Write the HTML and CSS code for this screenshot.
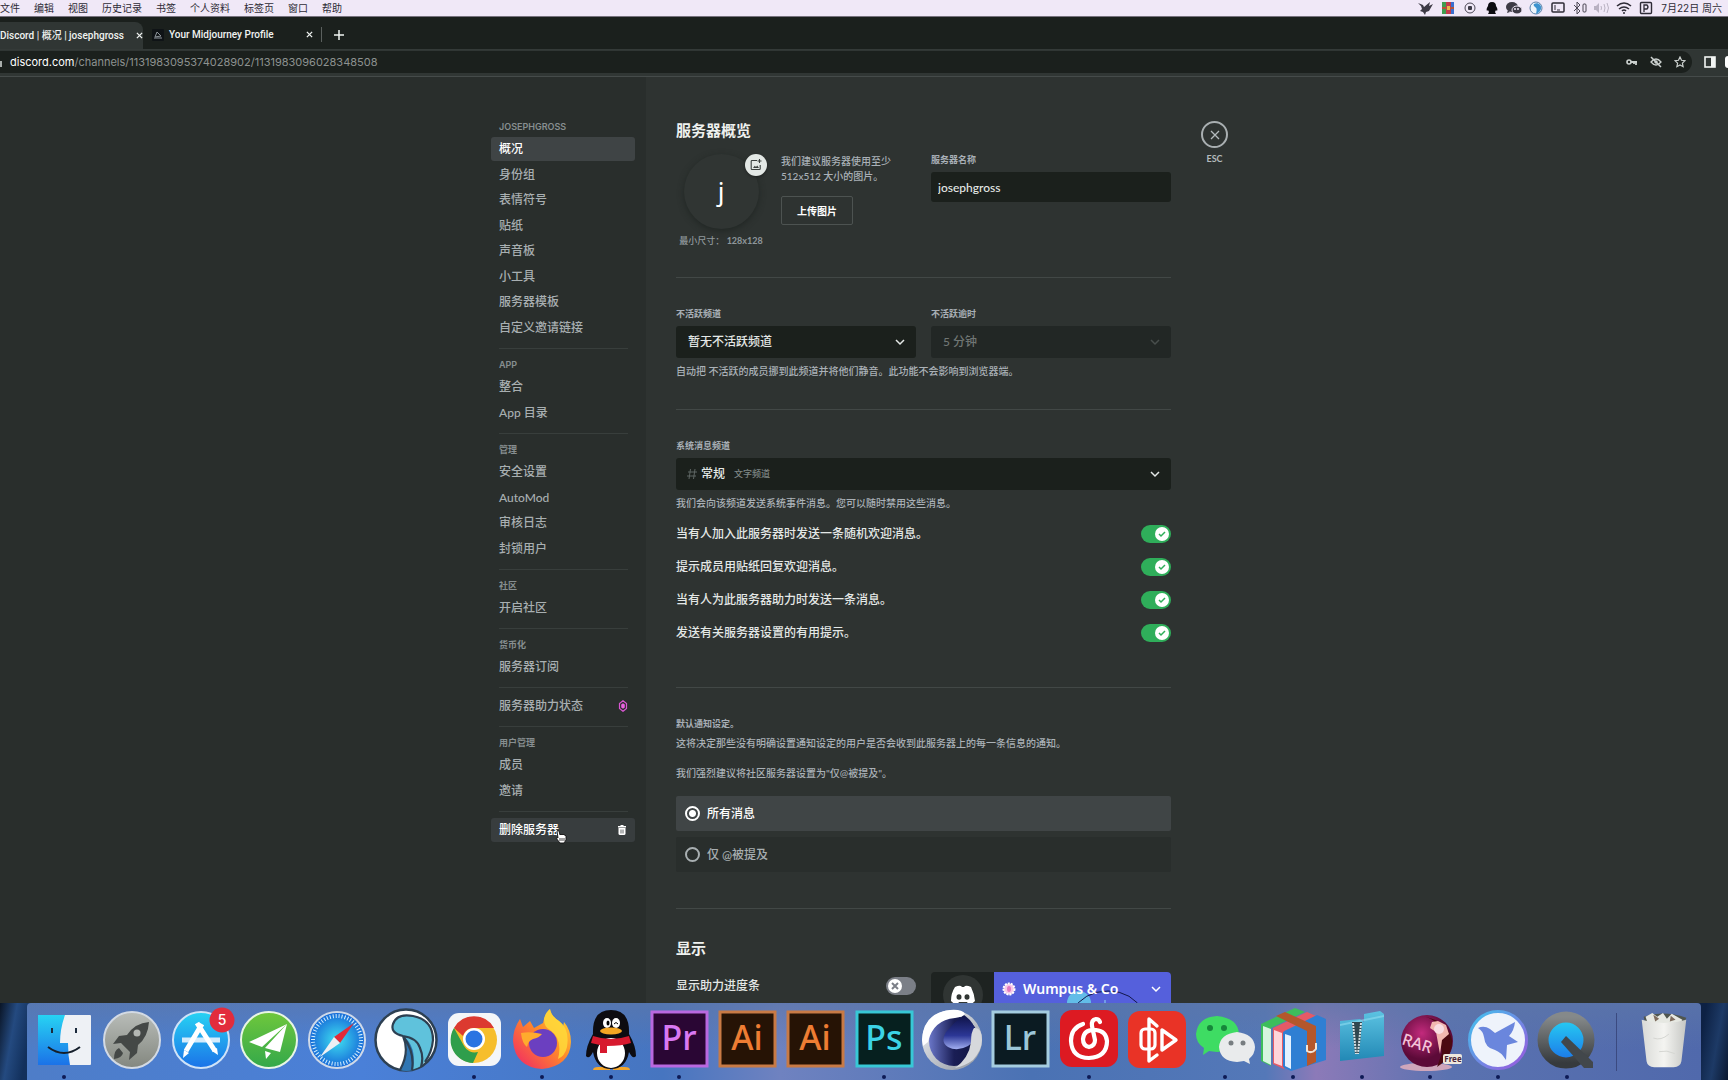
FILE: index.html
```html
<!DOCTYPE html>
<html lang="zh-CN">
<head>
<meta charset="utf-8">
<meta name="viewport" content="width=device-width, initial-scale=1">
<title>Discord | 概况 | josephgross</title>
<link rel="stylesheet" href="styles.css">
</head>
<body>
<header class="menubar">
  <nav class="menus">
    <button>文件</button><button>编辑</button><button>视图</button><button>历史记录</button><button>书签</button><button>个人资料</button><button>标签页</button><button>窗口</button><button>帮助</button>
  </nav>
  <div class="status">
    <svg class="st" viewBox="0 0 16 14"><path d="M0 2l5 2 1 2L12 1l-1 4 4-2-4 7-3 1-1 3-2-3-3-1 2-2-1-3z" fill="#3d3a45"/></svg>
    <svg class="st" viewBox="0 0 16 14"><rect x="2" y="1" width="12" height="12" rx="1" fill="#c23b4b"/><path d="M2 1h4v12H2z" fill="#3f9d4f"/><path d="M11 1h3v12h-3z" fill="#3a6fd0"/><path d="M2 6h12v2H2z" fill="#b5533a"/><rect x="7" y="5" width="3" height="4" fill="#e7b64b"/></svg>
    <svg class="st" viewBox="0 0 16 14"><circle cx="8" cy="7" r="5" fill="none" stroke="#4a4653"/><rect x="6" y="5" width="4" height="4" rx="1" fill="#3d3a45"/></svg>
    <svg class="st" viewBox="0 0 16 14"><path d="M8 1c3 0 4 2 4 4 1 2 2 3 1 5l-1-1-1 2 1 2H4l1-2-1-2-1 1c-1-2 0-3 1-5 0-2 1-4 4-4z" fill="#0c0b10"/></svg>
    <svg class="st" viewBox="0 0 16 14"><ellipse cx="6" cy="6" rx="6" ry="5" fill="#3d3a45"/><ellipse cx="11" cy="9" rx="5" ry="4" fill="#3d3a45" stroke="#efe7f6"/><path d="M2 9l-1 3 3-1z" fill="#3d3a45"/><circle cx="9" cy="8" r="1" fill="#efe7f6"/><circle cx="12" cy="8" r="1" fill="#efe7f6"/></svg>
    <svg class="st" viewBox="0 0 16 14"><circle cx="8" cy="7" r="6" fill="#eef4fb" stroke="#5b7fa8"/><path d="M6 3c4-2 8 1 7 5-1 3-3 4-5 5 1-4 1-6-1-7-1-1-2-2-1-3z" fill="#3d93cf"/></svg>
    <svg class="st" viewBox="0 0 16 14"><rect x="2" y="2" width="12" height="9" rx="1" fill="none" stroke="#2e2b36" stroke-width="1.5"/><path d="M5 4v5M7 9h3" stroke="#2e2b36"/></svg>
    <svg class="st" viewBox="0 0 16 14"><path d="M2 4l6 6-3 3V1l3 3-6 6" fill="none" stroke="#4a4653"/><rect x="11" y="3" width="3" height="8" rx="1" fill="none" stroke="#4a4653"/></svg>
    <svg class="st" viewBox="0 0 16 14"><path d="M0 5h2l3-3v10L2 9H0z" fill="#b9b2c2"/><path d="M7 5q1 2 0 4M10 3q2 4 0 8M13 2q3 5 0 10" fill="none" stroke="#b9b2c2"/></svg>
    <svg class="st" viewBox="0 0 16 14"><path d="M1 5q7-6 14 0M3 8q5-4 10 0M6 10q2-2 4 0" fill="none" stroke="#2e2b36" stroke-width="1.6"/><circle cx="8" cy="12" r="1" fill="#2e2b36"/></svg>
    <svg class="st" viewBox="0 0 16 14"><rect x="2.500" y="1.500" width="11" height="11" rx="1" fill="none" stroke="#2e2b36" stroke-width="1.4"/><path d="M6 11V4h3q2 2 0 4H6" fill="none" stroke="#2e2b36" stroke-width="1.3"/></svg>
    <time>7月22日 周六</time>
  </div>
</header>

<div class="tabs">
  <div class="tab on"><button class="tabname">Discord | 概况 | josephgross</button><button class="tx" aria-label="关闭标签页"><svg viewBox="0 0 8 8"><path d="M1 1l6 6M7 1L1 7"/></svg></button></div>
  <div class="tab"><svg class="fav" viewBox="0 0 12 12"><rect width="12" height="12" rx="1" fill="#0f1316"/><path d="M2 9h8M3 8l2-5 4 4z" fill="none" stroke="#8d949a"/></svg><button class="tabname">Your Midjourney Profile</button><button class="tx" aria-label="关闭标签页"><svg viewBox="0 0 8 8"><path d="M1 1l6 6M7 1L1 7"/></svg></button></div>
  <button class="tx plus" aria-label="新标签页"><svg viewBox="0 0 10 10"><path d="M5 0v10M0 5h10"/></svg></button>
</div>

<div class="toolbar">
  <div class="omni">
    <svg class="lock" viewBox="0 0 4 10"><rect y="4" width="2" height="6" fill="#a9aeac"/></svg>
    <label for="url">discord.com</label><input id="url" value="/channels/1131983095374028902/1131983096028348508">
    <button aria-label="密码"><svg viewBox="0 0 12 12"><circle cx="3" cy="6" r="2" fill="none" stroke="#ccd1cf" stroke-width="1.600"/><path d="M5 6h6M10 6v3M8 6v2" stroke="#ccd1cf" stroke-width="1.800" fill="none"/></svg></button>
    <button aria-label="隐私"><svg viewBox="0 0 12 12"><path d="M1 6q5-6 10 0-5 6-10 0z" fill="none" stroke="#ccd1cf" stroke-width="1.300"/><circle cx="6" cy="6" r="1.700" fill="#ccd1cf"/><path d="M1 1l10 10" stroke="#ccd1cf" stroke-width="1.500"/></svg></button>
    <button aria-label="收藏"><svg viewBox="0 0 12 12"><path d="M6 1l1.500 3.300 3.500.400-2.600 2.400.700 3.600L6 9l-3.100 1.700.700-3.600L1 4.700l3.500-.400z" fill="none" stroke="#ccd1cf" stroke-width="1.200"/></svg></button>
  </div>
  <button class="panel" aria-label="侧边栏"><svg viewBox="0 0 12 12"><rect x="1" y="1" width="10" height="10" fill="none" stroke="#f2f5f3" stroke-width="1.600"/><rect x="7" y="1" width="4" height="10" fill="#f2f5f3"/></svg></button>
  <span class="me"></span>
</div>

<div class="app">
  <aside class="side">
    <nav class="sidenav">
      <h2>JOSEPHGROSS</h2>
      <ul><li><a class="cur" href="#o">概况</a></li><li><a href="#r">身份组</a></li><li><a href="#e">表情符号</a></li><li><a href="#s">贴纸</a></li><li><a href="#b">声音板</a></li><li><a href="#w">小工具</a></li><li><a href="#t">服务器模板</a></li><li><a href="#v">自定义邀请链接</a></li></ul>
      <hr><h2>APP</h2>
      <ul><li><a href="#i">整合</a></li><li><a href="#a">App 目录</a></li></ul>
      <hr><h2>管理</h2>
      <ul><li><a href="#sf">安全设置</a></li><li><a href="#am">AutoMod</a></li><li><a href="#al">审核日志</a></li><li><a href="#bn">封锁用户</a></li></ul>
      <hr><h2>社区</h2>
      <ul><li><a href="#c">开启社区</a></li></ul>
      <hr><h2>货币化</h2>
      <ul><li><a href="#m">服务器订阅</a></li></ul>
      <hr>
      <ul><li><a href="#bo">服务器助力状态<svg class="gem" viewBox="0 0 10 12"><path d="M5 .700l3.500 2.800v5L5 11.300 1.500 8.500v-5z" fill="none" stroke="#d957d2" stroke-width="1.200"/><path d="M5 3.200l1.800 1.400v2.800L5 8.800 3.200 7.400V4.600z" fill="#e963e0"/></svg></a></li></ul>
      <hr><h2>用户管理</h2>
      <ul><li><a href="#mb">成员</a></li><li><a href="#iv">邀请</a></li></ul>
      <hr>
      <ul><li class="del"><button>删除服务器<svg class="bin" viewBox="0 0 10 10"><path d="M3.500 0h3v1H9v1.500H1V1h2.500z" fill="#fff"/><path d="M1.500 3h7v5.500q0 1.500-1.500 1.500H3q-1.500 0-1.500-1.500z" fill="#fff"/><path d="M4 4.500v4M6 4.500v4" stroke="#3c4142" stroke-width=".800"/></svg></button>
        <svg class="hand" viewBox="0 0 12 14"><path d="M2 1q1-1 2 0l1 4 1-1 1 1 1-1 1 1h1l1 1v4l-2 3H5L1 8q0-1 2 0z" fill="#fff" stroke="#111" stroke-width=".900"/><path d="M5 8v3M7 8v3M9 8v3" stroke="#111" stroke-width=".800"/></svg></li></ul>
    </nav>
  </aside>

  <main class="main">
    <div class="content">
      <h1>服务器概览</h1>
      <section class="intro">
        <div class="icon">
          <div class="avatar">j<button class="addpic" aria-label="上传"><svg viewBox="0 0 12 12"><path d="M7 1.500H2q-.800 0-.800.800v7.400q0 .800.800.800h7.400q.800 0 .800-.800V6M9.500 0v4M7.500 2h4" fill="none" stroke="#3a403e" stroke-width="1.100"/><path d="M3 9l1.800-2.200L6 8l1.200-1.500L9 9z" fill="#3a403e"/></svg></button></div>
          <p class="min">最小尺寸： <b>128x128</b></p>
        </div>
        <div class="upload"><p class="desc">我们建议服务器使用至少 512x512 大小的图片。</p><button class="outline">上传图片</button></div>
        <div class="field"><label class="lab" for="name">服务器名称</label><input id="name" class="box" value="josephgross"></div>
      </section>
      <hr>
      <section>
        <div class="two">
          <div class="field"><label class="lab" for="afk">不活跃频道</label><div class="sel"><select id="afk"><option>暂无不活跃频道</option></select><svg class="chev" viewBox="0 0 10 10"><path d="M1 3l4 4 4-4"/></svg></div></div>
          <div class="field"><label class="lab" for="afkt">不活跃逾时</label><div class="sel off"><select id="afkt" disabled><option>5 分钟</option></select><svg class="chev" viewBox="0 0 10 10"><path d="M1 3l4 4 4-4"/></svg></div></div>
        </div>
        <p class="desc below">自动把 不活跃的成员挪到此频道并将他们静音。此功能不会影响到浏览器端。</p>
      </section>
      <hr>
      <section>
        <label class="lab" for="sys">系统消息频道</label>
        <div class="sel chan"><svg class="hash" viewBox="0 0 10 10"><path d="M3.500 0L2 10M8 0L6.500 10M1 3h9M0 7h9"/></svg><select id="sys"><option>常规</option></select><span class="kind">文字频道</span><svg class="chev" viewBox="0 0 10 10"><path d="M1 3l4 4 4-4"/></svg></div>
        <p class="desc below">我们会向该频道发送系统事件消息。您可以随时禁用这些消息。</p>
        <div class="rows">
          <label class="row">当有人加入此服务器时发送一条随机欢迎消息。<span class="tog"><input type="checkbox" checked><svg viewBox="0 0 14 14"><path d="M4 7l2 2 4-4"/></svg></span></label>
          <label class="row">提示成员用贴纸回复欢迎消息。<span class="tog"><input type="checkbox" checked><svg viewBox="0 0 14 14"><path d="M4 7l2 2 4-4"/></svg></span></label>
          <label class="row">当有人为此服务器助力时发送一条消息。<span class="tog"><input type="checkbox" checked><svg viewBox="0 0 14 14"><path d="M4 7l2 2 4-4"/></svg></span></label>
          <label class="row">发送有关服务器设置的有用提示。<span class="tog"><input type="checkbox" checked><svg viewBox="0 0 14 14"><path d="M4 7l2 2 4-4"/></svg></span></label>
        </div>
      </section>
      <hr>
      <section>
        <h3 class="lab">默认通知设定。</h3>
        <p class="desc para">这将决定那些没有明确设置通知设定的用户是否会收到此服务器上的每一条信息的通知。</p>
        <p class="desc para">我们强烈建议将社区服务器设置为"仅@被提及"。</p>
        <label class="radio on"><input type="radio" name="n" checked>所有消息</label>
        <label class="radio"><input type="radio" name="n">仅 @被提及</label>
      </section>
      <hr>
      <h1>显示</h1>
      <section class="two">
        <div class="disp"><label class="row">显示助力进度条<span class="tog no"><input type="checkbox"><svg viewBox="0 0 14 14"><path d="M4 4l6 6M10 4l-6 6"/></svg></span></label></div>
        <div class="preview">
          <div class="rail"><svg viewBox="0 0 40 40"><circle cx="20" cy="20" r="20" fill="#303533"/><path d="M12 12q4-2 6-1l1 1h2l1-1q2-1 6 1 3 6 4 14-3 3-6 4l-2-3h-8l-2 3q-3-1-6-4 0-8 4-14z" fill="#fff"/><ellipse cx="16" cy="22" rx="2.500" ry="2.800" fill="#303533"/><ellipse cx="24" cy="22" rx="2.500" ry="2.800" fill="#303533"/></svg></div>
          <div class="banner"><svg class="seal" viewBox="0 0 14 14"><circle cx="7" cy="7" r="5.500" fill="#f7c9e6" stroke="#fff" stroke-width="2" stroke-dasharray="2 1"/><ellipse cx="7" cy="7" rx="2" ry="3" fill="#e279c0"/></svg><b>Wumpus &amp; Co</b><svg class="chev" viewBox="0 0 10 10"><path d="M1 3l4 4 4-4"/></svg>
            <svg class="art" viewBox="0 0 80 40"><circle cx="13" cy="13" r="12" fill="#62bde8"/><path d="M5 22Q18 1 42 1t36 21" fill="none" stroke="#13174a"/><path d="M39 10v6" stroke="#8ed8f4"/></svg></div>
        </div>
      </section>
    </div>
    <div class="closebox"><button class="close" aria-label="关闭"><svg viewBox="0 0 10 10"><path d="M1 1l8 8M9 1L1 9"/></svg></button><span>ESC</span></div>
  </main>
</div>

<footer class="desk">
<div class="dock">
  <svg class="defs" width="0" height="0"><defs>
    <linearGradient id="gB" x2="0" y2="1"><stop stop-color="#27d3f3"/><stop offset="1" stop-color="#1b72e8"/></linearGradient>
    <linearGradient id="gG" x2="0" y2="1"><stop stop-color="#b9bdb9"/><stop offset="1" stop-color="#83877f"/></linearGradient>
    <linearGradient id="gN" x2="0" y2="1"><stop stop-color="#6fc73c"/><stop offset="1" stop-color="#33a84a"/></linearGradient>
    <linearGradient id="gF" x1="1" y1="0" x2="0" y2="1"><stop stop-color="#ffe03a"/><stop offset=".450" stop-color="#ff8a2a"/><stop offset="1" stop-color="#f0206a"/></linearGradient>
    <linearGradient id="gK" x2="1" y2="1"><stop stop-color="#f3f6fa"/><stop offset="1" stop-color="#8e949e"/></linearGradient>
    <linearGradient id="gD" x2="1" y2="0"><stop stop-color="#6a76c8"/><stop offset=".500" stop-color="#1a1e55"/><stop offset="1" stop-color="#10143f"/></linearGradient>
    <linearGradient id="gE" x2="0" y2="1"><stop stop-color="#0d1145"/><stop offset=".600" stop-color="#2c3796"/><stop offset="1" stop-color="#a3b0f2"/></linearGradient>
    <linearGradient id="gZ" x2="0" y2="1"><stop stop-color="#5cc3e2"/><stop offset="1" stop-color="#2288b5"/></linearGradient>
    <linearGradient id="gP" x2="1" y2="1"><stop stop-color="#3fc4ee"/><stop offset="1" stop-color="#9b55dd"/></linearGradient>
    <linearGradient id="gQ" x2="0" y2="1"><stop stop-color="#85898a"/><stop offset="1" stop-color="#363a3d"/></linearGradient>
    <radialGradient id="gR" cx=".400" cy=".350"><stop stop-color="#c22a7c"/><stop offset="1" stop-color="#5c0a38"/></radialGradient>
    <radialGradient id="gS"><stop stop-color="#3fe0f0"/><stop offset="1" stop-color="#1668d8"/></radialGradient>
    <linearGradient id="gT" x2="1" y2="0"><stop stop-color="#d9dad7"/><stop offset=".500" stop-color="#f4f4f1"/><stop offset="1" stop-color="#c6c7c4"/></linearGradient>
  </defs></svg>
  <ul class="apps">
    <li class="run"><svg viewBox="0 0 64 64"><rect x="6" y="7" width="53" height="50" rx="1" fill="#eef1f5"/><path d="M6 7h27q-5 14-5 28h8q0 12 2 22H6z" fill="url(#gB)"/><path d="M20 20v5M44 20v5" stroke="#1b2a3c" stroke-width="2"/><path d="M16 39q16 12 32 0" fill="none" stroke="#16202c" stroke-width="2"/></svg></li>
    <li><svg viewBox="0 0 64 64"><circle cx="32" cy="32" r="28" fill="url(#gG)" stroke="#d3dae4" stroke-width="2"/><path d="M49 14q-14 1-22 13l-8 1-6 8 8-1 9 9-1 8 8-7 1-8q10-8 11-23zM19 40q-5 2-5 11 8-1 9-6z" fill="#444846"/><circle cx="37" cy="25" r="3.500" fill="#b3b7b3"/></svg></li>
    <li><svg viewBox="0 0 64 64"><circle cx="32" cy="32" r="28" fill="url(#gB)" stroke="#cfe3f8" stroke-width="2"/><path d="M13 32h38" stroke="#d5ecfc" stroke-width="5"/><path d="M33 16L17 43M28 15l18 28" stroke="#fff" stroke-width="5"/><path d="M15 42l5 3-6 5zM43 43l5-3 1 7z" fill="#fff"/><circle cx="53" cy="12" r="12.500" fill="#e22c3c"/><text x="53" y="17" text-anchor="middle" class="num">5</text></svg></li>
    <li><svg viewBox="0 0 64 64"><circle cx="32" cy="32" r="28" fill="url(#gN)" stroke="#e8f6e4" stroke-width="2"/><path d="M50 16L12 34l13 5zM50 16L28 40l15 4zM28 43l6 2-5 6z" fill="#fff"/></svg></li>
    <li><svg viewBox="0 0 64 64"><circle cx="32" cy="32" r="28" fill="url(#gS)" stroke="#cfd9e8" stroke-width="2"/><circle cx="32" cy="32" r="24" fill="none" stroke="#d5efff" stroke-width="4" stroke-dasharray="1 2"/><path d="M49 15L29 29l6 6z" fill="#e32a37"/><path d="M15 49l14-20 6 6z" fill="#eef0f3"/></svg></li>
    <li><svg viewBox="0 0 64 64"><circle cx="32" cy="32" r="30.500" fill="#fff" stroke="#2d4052" stroke-width="2.500"/><path d="M29 28q-13-3-10-12Q23 5 39 8q20 4 20 24 0 15-12 26-8 5-17 4 6-9 3-20-1-8-4-14z" fill="#5fc2dc"/><path d="M29 28q8 15-3 34 6 2 13 0 4-24-10-34z" fill="#2f76b3"/><path d="M29 28q-13-3-10-12Q23 5 39 8q20 4 20 24-1 12-8 22M29 28q14 2 17 12 4 9 1 19M29 28q12 16 9 34M29 28q7 16-3 34" fill="none" stroke="#2d4052" stroke-width="2.200"/></svg></li>
    <li class="run"><svg viewBox="0 0 64 64"><rect x="6" y="5" width="53" height="53" rx="11" fill="#f4f6f8"/><circle cx="32" cy="32" r="23" fill="#f6be2c"/><path d="M12 20a23 23 0 0 1 40 0H32a12 12 0 0 0-11 8z" fill="#dc3a30"/><path d="M12 20l10 18a12 12 0 0 0 14 6l-5 11A23 23 0 0 1 12 20z" fill="#2f9e4c"/><circle cx="32" cy="31" r="11" fill="#fff"/><circle cx="32" cy="31" r="8.500" fill="#2a74e2"/></svg></li>
    <li class="run"><svg viewBox="0 0 64 64"><path d="M3 33q0-12 7-22l3 8 7-6 4 7 9-5Q35 5 40 1q1 7 9 12 3 2 4 6l1-5q7 8 7 20Q60 58 32 61 5 59 3 33z" fill="url(#gF)"/><circle cx="33" cy="35" r="14" fill="#6b3fc0"/><path d="M11 25q9-2 21 1-3 4-9 5-5 2-6 8-5-4-6-14z" fill="#ffab2d"/><path d="M40 1q1 7 9 12 11 8 8 26-2 9-9 12 5-20-8-29-6-3-6-11 1-6 6-10z" fill="#ffd93a" opacity=".850"/></svg></li>
    <li class="run"><svg viewBox="0 0 64 64"><path d="M19 59h12v3H14q0-3 5-3zM34 59h12q5 0 5 3H34z" fill="#f3a62c"/><path d="M14 26Q13 2 32 2t18 24q7 12 7 22-3 4-7-4-3 17-18 17T14 44q-4 8-7 4 0-10 7-22z" fill="#0d0c11"/><ellipse cx="32" cy="45" rx="14" ry="15" fill="#fff"/><path d="M14 28q18 6 36 0l2 7q-9 3-24 3v7h-7v-8l-9-2z" fill="#d7192e"/><ellipse cx="28" cy="15" rx="4" ry="5" fill="#fff"/><ellipse cx="37" cy="15" rx="4" ry="5" fill="#fff"/><ellipse cx="29" cy="15" rx="1.500" ry="2.500"/><path d="M35 16q2-3 4 0" fill="none" stroke="#000"/><ellipse cx="32" cy="23" rx="11" ry="3.500" fill="#f5a623"/></svg></li>
    <li class="run"><svg viewBox="0 0 64 64"><rect x="5" y="4" width="55" height="54" fill="#2a0634" stroke="#b968e0" stroke-width="3"/><text x="32" y="42" text-anchor="middle" class="ad" fill="#d978f3">Pr</text></svg></li>
    <li><svg viewBox="0 0 64 64"><rect x="5" y="4" width="55" height="54" fill="#261305" stroke="#c87a45" stroke-width="3"/><text x="32" y="42" text-anchor="middle" class="ad" fill="#ee7d33">Ai</text></svg></li>
    <li><svg viewBox="0 0 64 64"><rect x="5" y="4" width="55" height="54" fill="#261305" stroke="#c87a45" stroke-width="3"/><text x="32" y="42" text-anchor="middle" class="ad" fill="#ee7d33">Ai</text></svg></li>
    <li class="run"><svg viewBox="0 0 64 64"><rect x="5" y="4" width="55" height="54" fill="#06201f" stroke="#37c8d6" stroke-width="3"/><text x="32" y="42" text-anchor="middle" class="ad" fill="#3bd3e6">Ps</text></svg></li>
    <li><svg viewBox="0 0 64 64"><circle cx="32" cy="32" r="30" fill="url(#gK)"/><ellipse cx="34" cy="33" rx="25" ry="25" fill="url(#gD)"/><path d="M44 7Q34 14 26 24q-6 10 2 15 9 5 20-1 8-5 8-14-2-10-12-17z" fill="url(#gE)"/><path d="M2 32Q3 5 30 2q12-1 15 4-3 3-10 4Q13 12 8 34l-5 4z" fill="#fff"/><path d="M54 20q8-1 8 12 0 10-9 20-8 6-18 8 14-10 16-26 0-10 3-14z" fill="#d6d8dc"/></svg></li>
    <li><svg viewBox="0 0 64 64"><rect x="5" y="4" width="55" height="54" fill="#0b1b22" stroke="#a5cde0" stroke-width="3"/><text x="32" y="42" text-anchor="middle" class="ad" fill="#9cc6d8">Lr</text></svg></li>
    <li class="run"><svg viewBox="0 0 64 64"><rect x="3" y="2" width="58" height="57" rx="12" fill="#dd1a22"/><path d="M26 16Q14 20 14 33q1 17 18 17 18-1 18-17-1-10-11-11-12-1-13 9 0 7 6 8 6-1 6-7l-3-14q-1-6 4-7 3 0 4 3" fill="none" stroke="#fff" stroke-width="4.200" stroke-linecap="round"/></svg></li>
    <li><svg viewBox="0 0 64 64"><rect x="3" y="3" width="58" height="57" rx="12" fill="#e93326"/><path d="M24 53V11l8 7M24 53l8-6" fill="none" stroke="#fff" stroke-width="3.400" stroke-linejoin="round" stroke-linecap="round"/><rect x="16" y="21" width="14" height="20" rx="4" fill="none" stroke="#fff" stroke-width="3.200"/><path d="M37 22v20l14-10z" fill="none" stroke="#fff" stroke-width="3.400" stroke-linejoin="round"/></svg></li>
    <li class="run"><svg viewBox="0 0 64 64"><path d="M24 8q21 2 22 18-1 17-22 18l-8-1-6 4 1-7Q3 35 3 26 5 9 24 8z" fill="#3edc63"/><circle cx="17" cy="20" r="3" fill="#16863a"/><circle cx="31" cy="20" r="3" fill="#16863a"/><path d="M44 24q17 2 18 15 0 7-6 12l1 5-6-3-7 1q-17-1-18-15 1-13 18-15z" fill="#e9ebec"/><circle cx="38" cy="35" r="2.500" fill="#777d80"/><circle cx="50" cy="35" r="2.500" fill="#777d80"/></svg></li>
    <li class="run"><svg viewBox="0 0 64 64"><path d="M0 16L34 0l10 4L10 20v38L0 53z" fill="#3dbd5c"/><path d="M2 18l8 3v36l-8-4z" fill="#d7f5df"/><path d="M12 20L46 4l9 4-32 15v38l-11-5z" fill="#e65a66"/><path d="M13 22l8 3v33l-8-3z" fill="#ffd5da"/><path d="M22 24L56 7l9 4v41L30 63l-8-4z" fill="#2f7fd3"/><path d="M24 26l6 2v33l-6-3z" fill="#e4f2ff"/><path d="M15 8l9-4 31 14v36l-9 4V23z" fill="#b4572c"/><path d="M46 37v6q5 3 9-2v-6" fill="none" stroke="#f0e4d8" stroke-width="2"/></svg></li>
    <li class="run"><svg viewBox="0 0 64 64"><path d="M10 13l20-2 4 3V6l16-3 4 3v42l-44 5z" fill="url(#gZ)"/><path d="M10 16l44-9v2l-44 9z" fill="#8fdcf0" opacity=".600"/><path d="M22 14h10l-3 32h-4z" fill="#304750"/><path d="M23 15l3 31M31 15l-3 31" stroke="#d7e2e6" stroke-width="2" stroke-dasharray="2 1"/></svg></li>
    <li class="run"><svg viewBox="0 0 64 64"><ellipse cx="28" cy="59" rx="26" ry="4" fill="#cfa6bb"/><circle cx="29" cy="33" r="26" fill="url(#gR)"/><path d="M28 9q10 3 12 10l4 26-5 14q16-10 15-27Q50 14 28 9z" fill="#4b0a12"/><path d="M34 14l6-1 8 4 3 9-7 6-2 14-4-22-6-4z" fill="#f2b8b0"/><circle cx="41" cy="21" r="5" fill="#f9dde2"/><text x="3" y="36" class="rar" transform="rotate(18 3 36)">RAR</text><rect x="45" y="46" width="19" height="10" rx="2" fill="#eee8dd"/><text x="55" y="54" text-anchor="middle" class="free">Free</text></svg></li>
    <li class="run"><svg viewBox="0 0 64 64"><circle cx="32" cy="32" r="28.500" fill="#eef3fb" stroke="url(#gP)" stroke-width="3"/><path d="M12 20q6-3 12 1l5 4 20-11q-1 9-6 14l9 6-11 3-1 15q-5-8-11-10-10-2-11-13-1-6-6-9z" fill="#6a86dd"/></svg></li>
    <li class="run"><svg viewBox="0 0 64 64"><circle cx="31" cy="32" r="23" fill="url(#gB)" stroke="url(#gQ)" stroke-width="11"/><path d="M31 28l27 26v6h-9L26 34z" fill="#42474b"/></svg></li>
  </ul>
  <span class="split"></span>
  <svg class="trash" viewBox="0 0 64 64"><path d="M12 8q20-7 44 1l-3 8H14z" fill="#50564f"/><path d="M14 8l7-4 5 4 6-4 4 6 5-5 11 6-4 6H17z" fill="#e6e8e2"/><path d="M22 6l6 4-4 3zM40 7l5 4-6 2z" fill="#7d6a5c"/><path d="M10 11q23 7 46 0l-5 43q-1 6-8 6H23q-7 0-8-6z" fill="url(#gT)"/><path d="M22 30q8 3 16-4M28 44q8-2 16 2" fill="none" stroke="#d4d5d1"/></svg>
</div>
</footer>
</body>
</html>
```
FILE: styles.css
```css
* { box-sizing: border-box; margin: 0; padding: 0; }
body {
  height: 100vh; display: flex; flex-direction: column; overflow: hidden;
  background: #2e3331; color: #e4e8e6;
  font: 500 12px/18px "Lato", "Noto Sans CJK SC", sans-serif;
}
button, input, select { font: inherit; color: inherit; background: none; border: 0; outline: 0; }
svg { display: block; flex: none; }
ul { list-style: none; }
a { color: inherit; text-decoration: none; }

.menubar {
  height: 17px; flex: none; display: flex; justify-content: space-between;
  background: #f0e8f7; color: #2e2b36; border-bottom: 1px solid #77727e;
  font: 400 10px/15px "Inter", "Noto Sans CJK SC", sans-serif;
}
.menus { display: flex; gap: 14px; }
.status { display: flex; align-items: center; gap: 6px; padding-right: 6px; }
.st { width: 16px; height: 14px; }
.status time { margin-left: 1px; }

.tabs {
  height: 33px; flex: none; display: flex; align-items: flex-end;
  background: #1b201d; color: #f0f3f1; padding-bottom: 1px;
  border-bottom: 1px solid #343a38;
  font: 500 10px/15px "Roboto", "Noto Sans CJK SC", sans-serif;
}
.tab { display: flex; align-items: center; width: 179px; height: 15px; margin-bottom: 6px; padding: 0 5px 0 9px; border-right: 1px solid #5b605e; }
.tab.on { width: 143px; height: 27px; margin-bottom: -1px; padding: 0 6px 0 0; border: 0; border-radius: 0 8px 0 0; background: #303634; }
.tabname { flex: 1; text-align: left; white-space: nowrap; }
.tab.on .tabname { text-align: right; margin-right: 8px; }
.fav { width: 12px; height: 12px; margin-right: 5px; }
.tx { flex: none; width: 14px; height: 14px; display: grid; place-items: center; }
.tx svg { width: 7px; height: 7px; fill: none; stroke: #f0f3f1; stroke-width: 1.5; }
.plus { margin: 0 0 6px 10px; }
.plus svg { width: 10px; height: 10px; }

.toolbar {
  height: 27px; flex: none; display: flex; align-items: center; gap: 12px;
  padding-bottom: 2px; background: #303634; border-bottom: 1px solid #454b4a;
  font: 400 11px/22px "Inter", sans-serif;
}
.omni { flex: 1; height: 22px; display: flex; align-items: center; background: #1b201d; border-radius: 0 11px 11px 0; padding-right: 6px; }
.lock { width: 4px; height: 10px; margin-right: 6px; }
.omni label { color: #fff; }
.omni input { flex: 1; color: #8d9290; }
.omni button { margin-left: 12px; }
.omni button svg, .panel svg { width: 12px; height: 12px; }
.me { width: 3px; height: 12px; border-radius: 6px 0 0 6px; background: #fff; margin-left: -3px; }

.app { flex: 1; min-height: 0; display: grid; grid-template-columns: minmax(0, 323fr) minmax(0, 541fr); overflow: hidden; }
.side { background: #292e2c; padding: 40px 11px 0 0; display: flex; justify-content: flex-end; }
.sidenav { width: 144px; color: #a8afb1; }
.sidenav h2 { padding-left: 8px; font: 600 9px/20px "Inter", "Noto Sans CJK SC", sans-serif; color: #878e90; }
.sidenav hr { margin: 8px 7px 6px 8px; border: 0; height: 1px; background: #383e3c; }
.sidenav li { position: relative; }
.sidenav li:nth-child(even) { margin-top: 2px; }
.sidenav li:nth-child(n+3):nth-child(odd) { margin-top: 1px; }
.sidenav a, .sidenav button { height: 24px; width: 100%; padding: 0 7px 0 8px; display: flex; align-items: center; justify-content: space-between; border-radius: 3px; }
.sidenav .cur { background: #3f4445; color: #fff; }
.sidenav .del button { padding-right: 8px; background: #383d3e; color: #fff; }
.gem { width: 10px; height: 12px; }
.bin { width: 10px; height: 10px; }
.hand { position: absolute; left: 64px; top: 12px; width: 12px; height: 14px; }

.main { padding: 44px 30px 0; display: flex; gap: 30px; align-items: flex-start; }
.content { flex: 0 1 495px; }
.content section { display: flow-root; }
.content hr { margin: 30px 0; border: 0; height: 1px; background: #424846; }
h1 { font-size: 15px; line-height: 18px; font-weight: 600; color: #eef1ef; margin-bottom: 15px; }
.lab { display: block; font-size: 9px; line-height: 12px; font-weight: 700; color: #a8afb6; margin-bottom: 6px; }
.desc { font-size: 10px; line-height: 15px; color: #aab1b7; }
.below { margin-top: 6px; }
.content .intro { display: flex; }
.icon { width: 90px; }
.avatar {
  position: relative; width: 75px; height: 75px; margin: 0 auto 6px; border-radius: 50%;
  background: #303533; box-shadow: 0 2px 6px #1c211fb0;
  font: 400 26px/75px "Noto Sans", sans-serif; text-align: center; color: #fff;
}
.addpic { position: absolute; right: -8px; top: 0; width: 22px; height: 22px; border-radius: 50%; background: #e3e8e5; display: grid; place-items: center; box-shadow: 0 1px 3px #0006; }
.addpic svg { width: 12px; height: 12px; }
.min { font-size: 9px; line-height: 12px; text-align: center; color: #8f979b; white-space: nowrap; }
.upload { width: 120px; margin: 0 30px 0 15px; }
.outline { margin-top: 12px; width: 72px; height: 29px; border: 1px solid #4d5351; border-radius: 2px; font-size: 10px; font-weight: 600; color: #fff; }
.field { flex: 1; min-width: 0; }
.box { width: 100%; height: 30px; padding: 0 7px; background: #1b201c; border-radius: 3px; }
.two, .content .two { display: flex; gap: 15px; }
.sel { position: relative; height: 32px; background: #1b201c; border-radius: 3px; }
.sel select { appearance: none; width: 100%; height: 32px; padding: 0 12px; opacity: 1; }
.chev { width: 10px; height: 10px; fill: none; stroke: #e4e8e6; stroke-width: 1.5; }
.sel .chev { position: absolute; right: 11px; top: 11px; pointer-events: none; }
.off { background: #222725; color: #707674; }
.off .chev { stroke: #484e4c; }
.chan select { padding-left: 25px; }
.hash { position: absolute; left: 11px; top: 11px; width: 10px; height: 10px; fill: none; stroke: #5f6664; }
.kind { position: absolute; left: 58px; top: 8px; font-size: 9px; line-height: 16px; color: #7f8685; }
.rows { margin-top: 14px; }
.row { display: flex; justify-content: space-between; align-items: center; height: 18px; margin-bottom: 15px; }
.tog { position: relative; width: 30px; height: 18px; }
.tog input { appearance: none; display: block; width: 30px; height: 18px; border-radius: 9px; background: #2fae5a; }
.tog svg { position: absolute; right: 2px; top: 2px; width: 14px; height: 14px; border-radius: 50%; background: #fff; fill: none; stroke: #2fae5a; stroke-width: 1.5; pointer-events: none; }
.tog.no input { background: #7b7f87; }
.tog.no svg { right: 14px; stroke: #7b7f87; stroke-width: 2; }
.para { margin-bottom: 15px; }
.radio { display: flex; align-items: center; gap: 7px; height: 35px; padding-left: 9px; margin-bottom: 6px; border-radius: 2px; background: #292e2c; color: #a8afb1; }
.radio.on { background: #404546; color: #fff; }
.radio input { appearance: none; width: 15px; height: 15px; border: 2px solid #a8afb1; border-radius: 50%; }
.radio.on input { border-color: #fff; background: radial-gradient(circle, #fff 3px, #40454600 4px); }
.disp { flex: 1; padding-top: 5px; }
.preview { flex: 1; display: flex; height: 110px; border-radius: 4px 4px 0 0; overflow: hidden; background: #1e2321; }
.rail { width: 63px; padding: 3px 0 0 12px; }
.rail svg { width: 40px; height: 40px; }
.banner { position: relative; flex: 1; height: 110px; padding: 0 10px 0 8px; background: #5560dc; color: #fff; display: flex; gap: 7px; font: 600 14px/33px "Noto Sans", sans-serif; }
.banner b { flex: 1; font-weight: 600; white-space: nowrap; position: relative; z-index: 1; }
.seal { width: 14px; height: 14px; margin-top: 10px; }
.banner .chev { margin-top: 12px; stroke: #fff; }
.art { position: absolute; left: 72px; top: 18px; width: 80px; height: 40px; }
.closebox { display: flex; flex-direction: column; align-items: center; gap: 3px; font-size: 9px; line-height: 16px; font-weight: 700; color: #b4babd; }
.close { width: 27px; height: 27px; border: 2px solid #a9afb1; border-radius: 50%; display: grid; place-items: center; }
.close svg { width: 10px; height: 10px; fill: none; stroke: #b4babd; stroke-width: 1.3; }

.desk { flex: none; padding: 0 27px; background: #12264a linear-gradient(100deg, #0a1526, #244a80 1%, #12305c 2%, #0d2144 98%, #1d3a66 99%, #0a1830); }
.dock { height: 77px; display: flex; align-items: flex-start; padding: 0 7px 0 3px; border-radius: 4px 4px 0 0; background: linear-gradient(#5c76a8aa, #4478d000 60%), linear-gradient(90deg, #4e7dc8, #4a80d8 20%, #4675c0 38%, #6f82c0 45%, #4a72b4 60%, #5478b8 74%, #8c7ab8 77%, #5a72b0 85%, #5069ac); }
.defs { position: absolute; }
.apps { flex: 1; display: flex; }
.apps li { flex: 1; height: 77px; padding-top: 5px; position: relative; display: flex; justify-content: center; }
.apps svg { width: 64px; height: 64px; overflow: visible; }
.run::after { content: ""; position: absolute; left: 50%; bottom: 1px; width: 4px; height: 4px; margin-left: -2px; border-radius: 50%; background: #0d1a55; }
.split { width: 1px; height: 58px; margin: 10px 15px 0; background: #3b4a80; }
.trash { width: 62px; height: 64px; margin-top: 5px; }
.num { font: 500 14px "Inter", sans-serif; fill: #fff; }
.ad { font: 500 34px "Noto Sans", sans-serif; }
.rar { font: 500 16px "Noto Sans", sans-serif; fill: #f3c3d8; }
.free { font: 700 8px "Noto Sans", sans-serif; fill: #4a2438; }
```
